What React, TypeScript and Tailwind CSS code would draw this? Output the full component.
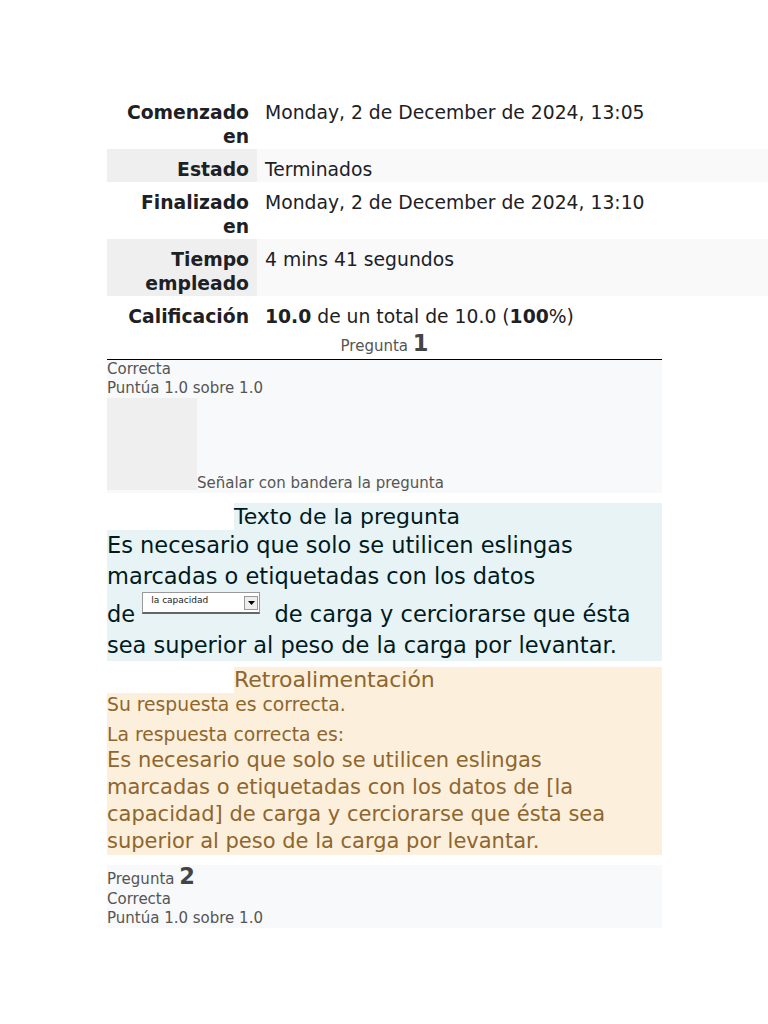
import React from 'react'

const rows = [
  { label: 'Comenzado en', value: <>Monday, 2 de December de 2024, 13:05</>, shaded: false },
  { label: 'Estado', value: <>Terminados</>, shaded: true },
  { label: 'Finalizado en', value: <>Monday, 2 de December de 2024, 13:10</>, shaded: false },
  { label: 'Tiempo empleado', value: <>4 mins 41 segundos</>, shaded: true },
  {
    label: 'Calificación',
    value: (
      <>
        <b>10.0</b> de un total de 10.0 (<b>100</b>%)
      </>
    ),
    shaded: false,
  },
]

function Summary() {
  return (
    <div className="grid w-[661px] grid-cols-[150px_1fr] text-[18.75px] leading-[24px] text-[#1d2125]">
      {rows.map(r => (
        <React.Fragment key={r.label}>
          <div className={`pb-0 pl-[8px] pr-[8px] pt-[9px] text-right font-bold ${r.shaded ? 'bg-[#efefef]' : ''}`}>{r.label}</div>
          <div className={`pb-0 pl-[8px] pt-[9px] ${r.shaded ? 'bg-[#f9f9f9]' : ''}`}>{r.value}</div>
        </React.Fragment>
      ))}
    </div>
  )
}

function QuestionInfo({ num, flag }: { num: number; flag?: boolean }) {
  return (
    <div className="bg-[#f8f9fa] text-[15px] leading-[19px] text-[#555]">
      {!flag && (
        <div className="h-[25px] leading-[25px]">
          Pregunta <span className="text-[22.5px] font-bold leading-none text-[#444]">{num}</span>
        </div>
      )}
      <div>Correcta</div>
      <div>Puntúa 1.0 sobre 1.0</div>
      {flag && (
        <div className="flex items-end">
          <div className="mb-[3px] h-[92px] w-[90px] bg-[#efefef]" />
          <span>Señalar con bandera la pregunta</span>
        </div>
      )}
    </div>
  )
}

function FakeSelect() {
  return (
    <span className="relative inline-block h-[22px] w-[118px] border border-[#999] border-b-2 border-b-[#666] bg-white pl-[8px] pt-[1px] align-[19px] text-[9px] leading-[12px] text-[#222]">
      la capacidad
      <span className="absolute right-[1px] top-[3px] flex h-[14px] w-[14px] items-center justify-center border border-[#999] bg-[#eee]">
        <svg width="7" height="4" viewBox="0 0 7 4">
          <path d="M0 0h7L3.5 4z" fill="#000" />
        </svg>
      </span>
    </span>
  )
}

export default function App() {
  return (
    <div className="min-h-[1024px] bg-white pl-[107px] pt-[92px] font-['DejaVu_Sans',sans-serif]">
      <Summary />

      <div className="w-[555px]">
        <div className="border-b border-black pt-[2px] text-center text-[15px] leading-[25px] text-[#555]">
          Pregunta <span className="text-[22.5px] font-bold text-[#444]">1</span>
        </div>

        <QuestionInfo num={1} flag />

        {/* Question text */}
        <div className="mt-[10px] text-[#001a1e]">
          <div className="ml-[127px] bg-[#e7f3f5] text-[22px] leading-[27px]">Texto de la pregunta</div>
          <div className="bg-[#e7f3f5] text-[22.5px] leading-[31px]">
            Es necesario que solo se utilicen eslingas
            <br />
            marcadas o etiquetadas con los datos
            <br />
            de <FakeSelect /> &nbsp;de carga y cerciorarse que ésta
            <br />
            sea superior al peso de la carga por levantar.
          </div>
        </div>

        {/* Feedback */}
        <div className="mt-[6px] text-[#8e662e]">
          <div className="ml-[127px] bg-[#fcefdc] text-[22px] leading-[26px]">Retroalimentación</div>
          <div className="bg-[#fcefdc]">
            <div className="text-[18.75px] leading-[24px]">Su respuesta es correcta.</div>
            <div className="mt-[6px] text-[18.75px] leading-[24px]">La respuesta correcta es:</div>
            <div className="text-[21px] leading-[27px]">
              Es necesario que solo se utilicen eslingas
              <br />
              marcadas o etiquetadas con los datos de [la
              <br />
              capacidad] de carga y cerciorarse que ésta sea
              <br />
              superior al peso de la carga por levantar.
            </div>
          </div>
        </div>

        <div className="mt-[10px]">
          <QuestionInfo num={2} />
        </div>
      </div>
    </div>
  )
}
